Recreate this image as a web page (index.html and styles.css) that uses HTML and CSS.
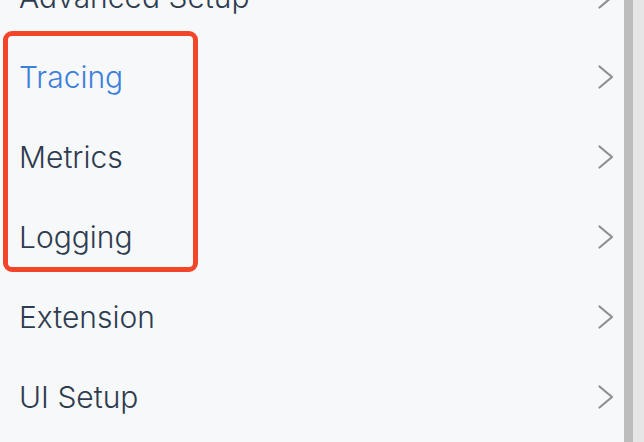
FILE: index.html
```html
<!DOCTYPE html>
<html>
<head>
<meta charset="utf-8">
<link rel="stylesheet" href="styles.css">
</head>
<body>
<div class="page">
  <ul class="menu">
    <li class="item"><span class="label">Advanced Setup</span><svg class="chev" viewBox="0 0 16 24"><path d="M1.5 1.5 L14 12 L1.5 22.5"/></svg></li>
    <li class="item active"><span class="label">Tracing</span><svg class="chev" viewBox="0 0 16 24"><path d="M1.5 1.5 L14 12 L1.5 22.5"/></svg></li>
    <li class="item"><span class="label">Metrics</span><svg class="chev" viewBox="0 0 16 24"><path d="M1.5 1.5 L14 12 L1.5 22.5"/></svg></li>
    <li class="item"><span class="label">Logging</span><svg class="chev" viewBox="0 0 16 24"><path d="M1.5 1.5 L14 12 L1.5 22.5"/></svg></li>
    <li class="item"><span class="label">Extension</span><svg class="chev" viewBox="0 0 16 24"><path d="M1.5 1.5 L14 12 L1.5 22.5"/></svg></li>
    <li class="item"><span class="label">UI Setup</span><svg class="chev" viewBox="0 0 16 24"><path d="M1.5 1.5 L14 12 L1.5 22.5"/></svg></li>
  </ul>
  <div class="track"></div>
  <div class="highlight"></div>
</div>
</body>
</html>
```
FILE: styles.css
```css
html, body {
  margin: 0;
  padding: 0;
  background: #f7f8fa;
}
.page {
  position: relative;
  display: flex;
  width: 644px;
  height: 442px;
  overflow: hidden;
  font-family: Inter, "Noto Sans", sans-serif;
}
.menu {
  list-style: none;
  margin: -43px 0 0 0;
  padding: 0;
  width: 624px;
  flex: none;
}
.item {
  display: flex;
  align-items: center;
  justify-content: space-between;
  height: 80px;
  padding: 0 10px 0 19px;
  color: #2e3c4f;
  font-size: 30px;
  font-weight: 300;
}
.item.active {
  color: #3d7fdc;
}
.chev {
  width: 16px;
  height: 24px;
  fill: none;
  stroke: #8f8f8f;
  stroke-width: 2.2;
  stroke-linecap: round;
  stroke-linejoin: round;
}
.track {
  flex: none;
  width: 20px;
  height: 442px;
  background: linear-gradient(to right, #bdbdbd 0, #bdbdbd 9px, #e6e6e6 9px, #e6e6e6 100%);
}
.highlight {
  position: absolute;
  left: 3px;
  top: 31px;
  width: 185px;
  height: 231px;
  border: 5px solid #f2452a;
  border-radius: 9px;
}
```
